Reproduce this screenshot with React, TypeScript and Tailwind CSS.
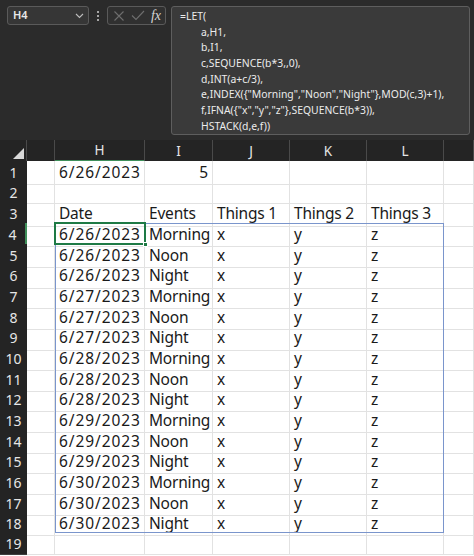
import React from "react";

const FONT = { fontFamily: '"Noto Sans", "Open Sans", sans-serif' };

const formula = [
  { text: "=LET(", indent: false },
  { text: "a,H1,", indent: true },
  { text: "b,I1,", indent: true },
  { text: "c,SEQUENCE(b*3,,0),", indent: true },
  { text: "d,INT(a+c/3),", indent: true },
  { text: 'e,INDEX({"Morning","Noon","Night"},MOD(c,3)+1),', indent: true },
  { text: 'f,IFNA({"x","y","z"},SEQUENCE(b*3)),', indent: true },
  { text: "HSTACK(d,e,f))", indent: true },
];

const columns = ["", "", "H", "I", "J", "K", "L", ""];
const colWidths = "grid-cols-[27px_28px_90px_68px_77px_77px_77px_30px]";

const dates = ["6/26/2023", "6/27/2023", "6/28/2023", "6/29/2023", "6/30/2023"];
const events = ["Morning", "Noon", "Night"];

type Row = { H?: string; I?: string; J?: string; K?: string; L?: string; rightI?: boolean };

function buildRows(): Row[] {
  const rows: Row[] = [
    { H: "6/26/2023", I: "5", rightI: true },
    {},
    { H: "Date", I: "Events", J: "Things 1", K: "Things 2", L: "Things 3" },
  ];
  dates.forEach((d) => {
    events.forEach((e) => {
      rows.push({ H: d, I: e, J: "x", K: "y", L: "z" });
    });
  });
  rows.push({});
  return rows;
}

function TopBar() {
  return (
    <div className="flex h-[140px] shrink-0 items-start bg-[#2b2b2b] pl-[7px] pt-[6px]">
      <div className="flex h-[19px] w-[82px] items-center justify-between rounded-[3px] border border-[#5a5a5a] bg-[#363636] pl-[5px] pr-[4px]">
        <span className="text-[11px] font-semibold text-[#e8e8e8]" style={FONT}>H4</span>
        <svg width="9" height="6" viewBox="0 0 9 6" fill="none">
          <path d="M1 1l3.5 3.5L8 1" stroke="#bdbdbd" strokeWidth="1.1" />
        </svg>
      </div>
      <div className="flex h-[19px] w-[18px] flex-col items-center justify-center gap-[2px]">
        <span className="h-[2px] w-[2px] rounded-full bg-[#cfcfcf]" />
        <span className="h-[2px] w-[2px] rounded-full bg-[#cfcfcf]" />
        <span className="h-[2px] w-[2px] rounded-full bg-[#cfcfcf]" />
      </div>
      <div className="flex h-[19px] w-[59px] items-center justify-between rounded-[3px] border border-[#5a5a5a] bg-[#303030] pl-[5px] pr-[4px]">
        <svg width="12" height="12" viewBox="0 0 12 12" fill="none">
          <path d="M1.5 1.5l9 9M10.5 1.5l-9 9" stroke="#6e6e6e" strokeWidth="1.1" />
        </svg>
        <svg width="14" height="11" viewBox="0 0 14 11" fill="none">
          <path d="M1 5.5l4 4L13 1" stroke="#6e6e6e" strokeWidth="1.1" />
        </svg>
        <span className="text-[14px] italic leading-none text-[#d4d4d4]" style={{ fontFamily: '"Liberation Serif", serif' }}>
          fx
        </span>
      </div>
      <div className="ml-[5px] mr-[4px] flex h-[129px] flex-1 flex-col rounded-[3px] border border-[#5e5e5e] bg-[#3a3a3a] pl-[8px] pt-[2px]">
        {formula.map((l, i) => (
          <div
            key={i}
            className={`h-[15.7px] whitespace-nowrap text-[10.4px] leading-[15.7px] text-[#ececec] ${l.indent ? "pl-[21px]" : ""}`}
            style={FONT}
          >
            {l.text}
          </div>
        ))}
      </div>
    </div>
  );
}

function HeaderRow() {
  return (
    <div className={`grid ${colWidths} h-[21px] shrink-0 bg-[#242424]`}>
      {columns.map((c, i) => (
        <div
          key={i}
          className={`relative flex items-center justify-center border-r border-[#4a4a4a] text-[13.5px] text-[#e6e6e6] ${
            c === "H" ? "border-b-2 border-b-[#3f8f5a]" : ""
          }`}
          style={FONT}
        >
          {i === 0 && (
            <svg className="absolute bottom-[3px] right-[2px]" width="11" height="11" viewBox="0 0 11 11">
              <path d="M11 0V11H0Z" fill="#d9d9d9" />
            </svg>
          )}
          {c}
        </div>
      ))}
    </div>
  );
}

function Cell({ value, right }: { value?: string; right?: boolean }) {
  const isDate = value ? /^\d+\/\d+\/\d+$/.test(value) : false;
  return (
    <div
      className={`flex items-center overflow-visible whitespace-nowrap border-r border-b border-[#e2e2e2] px-[4px] text-[15.5px] text-[#1a1a1a] ${
        right ? "justify-end" : ""
      } ${isDate ? "tracking-[0.9px]" : "tracking-[-0.2px]"}`}
      style={FONT}
    >
      {value}
    </div>
  );
}

export default function App() {
  const rows = buildRows();
  return (
    <div className="flex h-[556px] w-[474px] flex-col overflow-hidden bg-[#2b2b2b]">
      <TopBar />
      <HeaderRow />
      <div className="relative flex-1 bg-white">
        {rows.map((r, i) => (
          <div key={i} className={`grid ${colWidths} h-[20.67px]`}>
            <div
              className={`flex items-center justify-center border-b border-[#3e3e3e] bg-[#242424] text-[14px] text-[#e6e6e6] ${
                i === 3 ? "border-r-2 border-r-[#3f8f5a]" : ""
              }`}
              style={FONT}
            >
              {i + 1}
            </div>
            <Cell />
            <Cell value={r.H} />
            <Cell value={r.I} right={r.rightI} />
            <Cell value={r.J} />
            <Cell value={r.K} />
            <Cell value={r.L} />
            <Cell />
          </div>
        ))}
        {/* spill range H4:L18 */}
        <div className="pointer-events-none absolute left-[55px] top-[62px] h-[310px] w-[389px] border border-[#7a95cc]" />
        {/* active cell H4 */}
        <div className="pointer-events-none absolute left-[54px] top-[61px] h-[23px] w-[92px] border-2 border-[#1e7a45]">
          <span className="absolute -bottom-[4px] -right-[4px] h-[5px] w-[5px] border border-white bg-[#1e7a45]" />
        </div>
      </div>
    </div>
  );
}
